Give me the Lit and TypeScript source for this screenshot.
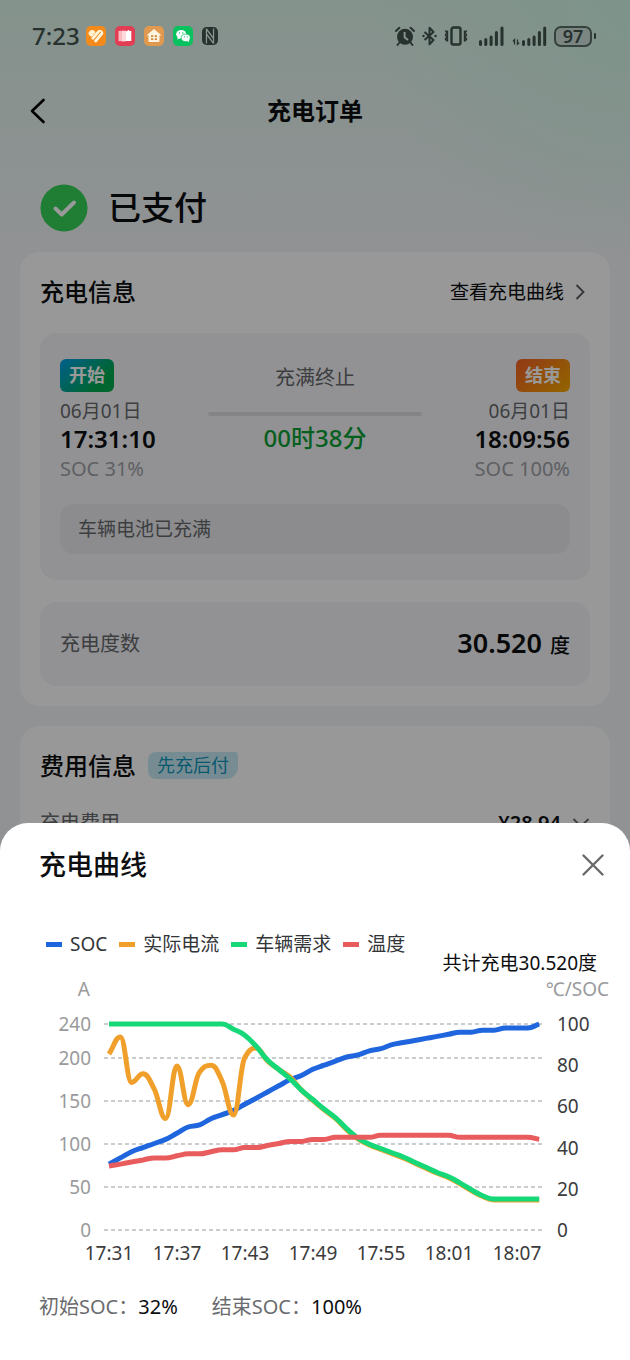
import { LitElement, html, svg, css } from "lit";
import { customElement } from "lit/decorators.js";

const SOC = [32, 35, 38, 40, 42, 44, 47, 50, 51, 54, 56, 58, 61, 64, 67, 70, 73, 75, 78, 80, 82, 84, 85, 87, 88, 90, 91, 92, 93, 94, 95, 96, 96, 97, 97, 98, 98, 98, 100];
const TEMPERATURE = [31, 32, 33, 34, 35, 35, 36, 37, 37, 38, 39, 39, 40, 40, 41, 42, 43, 43, 44, 44, 45, 45, 45, 45, 46, 46, 46, 46, 46, 46, 46, 45, 45, 45, 45, 45, 45, 45, 44];
const DEMAND = [240, 240, 240, 240, 240, 240, 240, 240, 240, 240, 240, 234, 227, 214, 198, 187, 176, 163, 152, 141, 131, 118, 107, 100, 95, 90, 85, 79, 73, 67, 62, 55, 47, 40, 36, 36, 36, 36, 36];
const CURRENT = [205, 225, 172, 182, 164, 130, 191, 146, 184, 192, 173, 134, 201, 212, 197, 187, 178, 163, 151, 140, 130, 117, 106, 99, 94, 89, 84, 78, 72, 66, 61, 54, 46, 39, 35, 35, 35, 35, 35];

const PLOT = { left: 109, step: 11.32, top: 49, bottom: 255 };

/** Smooth path through one value per minute, without overshoot. */
function curve(values: number[], max: number): string {
  const h = PLOT.step;
  const y = values.map((v) => PLOT.bottom - (v / max) * (PLOT.bottom - PLOT.top));
  const slope = y.slice(1).map((v, i) => (v - y[i]) / h);
  const tangent = y.map((_, i) => {
    if (i === 0) return slope[0];
    if (i === y.length - 1) return slope[i - 1];
    const a = slope[i - 1];
    const b = slope[i];
    if (a * b <= 0) return 0;
    return Math.sign(a) * Math.min(Math.abs(a + b) / 2, 2 * Math.abs(a), 2 * Math.abs(b));
  });
  const r = h * 0.42;
  let d = `M${PLOT.left} ${y[0].toFixed(1)}`;
  for (let i = 1; i < y.length; i++) {
    const x0 = PLOT.left + h * (i - 1);
    const x1 = x0 + h;
    d += `C${(x0 + r).toFixed(1)} ${(y[i - 1] + tangent[i - 1] * r).toFixed(1)} ${(x1 - r).toFixed(1)} ${(y[i] - tangent[i] * r).toFixed(1)} ${x1.toFixed(1)} ${y[i].toFixed(1)}`;
  }
  return d;
}

@customElement("status-bar")
class StatusBar extends LitElement {
  static styles = css`
    :host { display: flex; align-items: center; justify-content: space-between; height: 72px; padding: 0 34px 0 32px; color: #27322f; position: relative; z-index: 2; }
    .group { display: flex; align-items: center; }
    .left { gap: 9px; }
    .time { font-size: 24px; line-height: 32px; font-weight: 500; margin-right: -3px; }
    .right { gap: 7px; }
    .battery { display: flex; align-items: center; }
    .level { box-sizing: border-box; width: 38px; height: 21px; border: 2px solid #35413d; border-radius: 7px; background: #7b8582; font-size: 18px; font-weight: 600; line-height: 17px; text-align: center; }
    .tip { width: 2px; height: 6px; margin-left: 2px; border-radius: 1px; background: #27322f; }
    svg { display: block; }
  `;
  render() {
    return html`
      <div class="group left">
        <span class="time">7:23</span>
        <svg width="20" height="20" viewBox="0 0 20 20"><rect width="20" height="20" rx="5" fill="#f58a1c"/><path d="M3 8.500C2.400 4.500 7 3.200 9.200 6L5.600 10.600Z" fill="#fff3cf" stroke="#fff3cf" stroke-linejoin="round"/><path d="M6.800 12.300 12.600 5.600M9.600 15 16 7.300" stroke="#fff6dc" stroke-width="2.800" stroke-linecap="round"/><path d="M12.600 5.600C14 4.300 16.700 5 16 7.300" stroke="#fff6dc" stroke-width="1.600" fill="none"/></svg>
        <svg width="20" height="20" viewBox="0 0 20 20"><rect width="20" height="20" rx="5" fill="#e23d52"/><path d="M3.500 5 9 4.600V15.400L3.500 15Z" fill="#fbb9c0"/><path d="M7 5.400 11 4.600V15.600L7 15Z" fill="#ffd9dc"/><path d="M11 5.600 14.200 3.800V5L16.300 5V15H11Z" fill="#fff"/></svg>
        <svg width="20" height="20" viewBox="0 0 20 20"><rect width="20" height="20" rx="5" fill="#e0994e"/><path d="M10 3.500 16.500 9H15V15.500H5V9H3.500Z" fill="#fff4df" stroke="#fff4df" stroke-linejoin="round"/><path d="M7 9.200H9.300V11H7ZM10.700 9.200H13V11H10.700ZM7 12.200H9.300V14H7ZM10.700 12.200H13V14H10.700Z" fill="#d08a44"/></svg>
        <svg width="20" height="20" viewBox="0 0 20 20"><rect width="20" height="20" rx="5" fill="#0ac160"/><ellipse cx="8.200" cy="8.300" rx="5" ry="4.200" fill="#fff"/><path d="M4.600 10.500 4.500 13.400 7.500 12Z" fill="#fff"/><ellipse cx="12.700" cy="11.800" rx="4.500" ry="3.700" fill="#fff" stroke="#0ac160" stroke-width=".7"/><path d="M14 14.500 16 16.200 16 13Z" fill="#fff"/><g fill="#0ac160"><circle cx="6.500" cy="7" r=".7"/><circle cx="9.800" cy="7" r=".7"/><circle cx="11.300" cy="10.800" r=".6"/><circle cx="14.200" cy="10.800" r=".6"/></g></svg>
        <svg width="16" height="20" viewBox="0 0 18 20" preserveAspectRatio="none"><rect x="0" y="1" width="18" height="18" rx="5" fill="#27322f"/><path d="M5 2.500V17.500M13 2.500V17.500M5 3 13 12.500M5 8 13 17.500" stroke="#8a9590" stroke-width="1.400" fill="none"/></svg>
      </div>
      <div class="group right">
        <svg width="20" height="20" viewBox="0 0 20 20"><circle cx="10" cy="10.800" r="8" fill="currentColor"/><path d="M9.600 6V11.200L13 14" stroke="#8a9590" stroke-width="1.900" fill="none"/><path d="M1 5 4.400 1.700M19 5 15.600 1.700M4.500 16.500 2.500 19M15.500 16.500 17.500 19" stroke="currentColor" stroke-width="1.900" stroke-linecap="round"/></svg>
        <svg width="15" height="20" viewBox="0 0 15 20"><path d="M2.500 6 11.500 14 7.500 18.200V1.800L11.500 6 2.500 14" stroke="currentColor" stroke-width="2" fill="none" stroke-linejoin="round"/><circle cx="1.500" cy="10" r="1.200" fill="currentColor"/><circle cx="13.500" cy="10" r="1.200" fill="currentColor"/></svg>
        <svg width="24" height="20" viewBox="0 0 24 20"><rect x="7.500" y="1.500" width="9" height="17" rx="2" fill="none" stroke="currentColor" stroke-width="2.400"/><path d="M1.300 4.500 2.900 6.500 1.400 9 2.900 11 1.400 13 2.900 15M3.500 4.500V15.500M22.700 4.500 21.100 6.500 22.600 9 21.100 11 22.600 13 21.100 15M20.500 4.500V15.500" stroke="currentColor" stroke-width="1.400" fill="none"/></svg>
        <svg width="30" height="20" viewBox="0 0 30 20"><path d="M5.500 15.500V18.500M10.800 13.500V18.500M16.100 11V18.500M21.400 6.500V18.500M27 2V18.500" stroke="currentColor" stroke-width="3" stroke-linecap="round"/></svg>
        <svg width="35" height="20" viewBox="0 0 35 20"><path d="M2.500 18.500V13.800L1 15.500M5.500 13.500V18.300L7.300 16.600" stroke="currentColor" stroke-width="1.300" fill="none"/><path d="M11.500 15.500V18.500M16.800 13.500V18.500M22.100 11V18.500M27.400 6.500V18.500M32.700 2V18.500" stroke="currentColor" stroke-width="3" stroke-linecap="round"/></svg>
        <div class="battery"><span class="level">97</span><span class="tip"></span></div>
      </div>
    `;
  }
}

@customElement("charge-chart")
class ChargeChart extends LitElement {
  static styles = css`
    :host { display: block; }
    svg { display: block; width: 100%; height: auto; }
    text { font-size: 19px; fill: #3b3b3d; }
    .muted { fill: #9a9a9c; }
    .end { text-anchor: end; }
    .mid { text-anchor: middle; }
    .grid { stroke: #cbcccd; stroke-width: 2; stroke-dasharray: 4 3; }
    .line { fill: none; stroke-width: 5; stroke-linejoin: round; }
    .soc { stroke: #1f66de; }
    .current { stroke: #f0a02a; }
    .demand { stroke: #17d878; }
    .temp { stroke: #e95c5e; }
  `;
  render() {
    const amps = [240, 200, 150, 100, 50, 0];
    const percents = [100, 80, 60, 40, 20, 0];
    const times = ["17:31", "17:37", "17:43", "17:49", "17:55", "18:01", "18:07"];
    const span = PLOT.bottom - PLOT.top;
    const ay = (v: number) => Math.round(PLOT.bottom - (v / 240) * span);
    const py = (v: number) => Math.round(PLOT.bottom - (v / 100) * span);
    return html`
      <svg viewBox="0 0 630 296" role="img" aria-label="充电曲线">
        <text class="muted end" x="90" y="21">A</text>
        <text class="muted end" x="609" y="21">℃/SOC</text>
        ${amps.map((v) => svg`<path class="grid" d="M104 ${ay(v)}H543"/><text class="muted end" x="91" y=${ay(v) + 7}>${v}</text>`)}
        ${percents.map((v) => svg`<text x="557" y=${py(v) + 7}>${v}</text>`)}
        ${times.map((t, i) => svg`<text class="mid" x=${109 + i * 68} y="285">${t}</text>`)}
        <path class="line soc" d=${curve(SOC, 100)}/>
        <path class="line current" d=${curve(CURRENT, 240)}/>
        <path class="line demand" d=${curve(DEMAND, 240)}/>
        <path class="line temp" d=${curve(TEMPERATURE, 100)}/>
      </svg>
    `;
  }
}

@customElement("app-root")
class AppRoot extends LitElement {
  static styles = css`
    :host { display: block; position: relative; height: 100vh; overflow: hidden; font-family: "Noto Sans", "Noto Sans CJK SC", sans-serif; color: #0c0e10; background: radial-gradient(circle at 100% 0, #d2f7e6 0, rgba(210, 247, 230, 0) 260px), linear-gradient(#dcf5e9 0, #e6f3f0 110px, #ecf3f4 190px, #f2f4f7 260px); }
    h1, h2, p, dl, dd { margin: 0; }
    button { padding: 0; border: 0; background: none; font: inherit; color: inherit; cursor: pointer; }
    svg { display: block; }
    .shade { position: absolute; inset: 0; z-index: 1; background: rgba(0, 0, 0, 0.4); }
    .nav { display: grid; grid-template-columns: 32px 1fr 32px; align-items: center; height: 78px; padding: 0 24px; }
    .nav h1 { font-size: 24px; line-height: 32px; font-weight: 600; text-align: center; }
    .paid { display: flex; align-items: center; gap: 20px; height: 102px; padding: 14px 40px 0; box-sizing: border-box; }
    .paid h2 { font-size: 33px; line-height: 44px; font-weight: 500; }
    .card { margin: 0 20px 20px; padding: 0 20px 20px; border-radius: 20px; background: #fefefe; }
    .head { display: flex; align-items: center; height: 79px; margin-bottom: 2px; }
    .head h2 { font-size: 24px; line-height: 32px; font-weight: 500; }
    .more { display: flex; align-items: center; height: 28px; gap: 6px; margin-left: auto; font-size: 19px; line-height: 28px; }
    .panel { padding: 26px 20px; border-radius: 16px; background: #f3f4f7; }
    .session { display: grid; grid-template-columns: 1fr 214px 1fr; }
    .side { display: flex; flex-direction: column; align-items: flex-start; }
    .side.finish { align-items: flex-end; }
    .badge { margin-bottom: 5px; padding: 0 9px; border-radius: 6px; color: #fff; font-size: 18px; line-height: 33px; font-weight: 600; background: linear-gradient(135deg, #00a2e8, #00a84e 75%); }
    .finish .badge { background: linear-gradient(135deg, #f25f25, #f5a800); }
    .date { color: #66686c; font-size: 19px; line-height: 28px; }
    .clock { font-size: 24px; line-height: 28px; font-weight: 600; }
    .soc { color: #9da0a5; font-size: 20px; line-height: 31px; }
    .middle { display: flex; flex-direction: column; align-items: stretch; text-align: center; }
    .reason { color: #66686c; font-size: 20px; line-height: 38px; }
    .rule { height: 4px; margin: 15px 0 7px; border-radius: 2px; background: #dcdde0; }
    .length { color: #0a9e35; font-size: 24px; line-height: 30px; font-weight: 500; }
    .note { margin-top: 20px; padding: 0 18px; border-radius: 14px; background: #e9eaed; color: #66686c; font-size: 19px; line-height: 50px; }
    .energy { display: flex; align-items: center; justify-content: space-between; height: 84px; margin-top: 22px; padding: 0 20px; }
    .label { color: #66686c; font-size: 20px; line-height: 28px; }
    .amount { display: flex; align-items: baseline; gap: 8px; font-size: 27px; line-height: 36px; font-weight: 600; }
    .unit { font-size: 20px; font-weight: 500; }
    .tag { margin-left: 12px; padding: 0 9px; border-radius: 8px 3px 12px 8px; background: #c5e9f4; color: #0f94ba; font-size: 18px; line-height: 27px; }
    .fee { display: flex; align-items: center; gap: 11px; height: 32px; }
    .price { margin-left: auto; font-size: 20px; font-weight: 600; line-height: 28px; }
    .sheet { position: absolute; left: 0; right: 0; bottom: 0; z-index: 3; border-radius: 28px 28px 0 0; background: #fff; }
    .title { display: flex; align-items: center; justify-content: space-between; height: 84px; padding: 0 26px 0 39px; }
    .title h2 { font-size: 27px; line-height: 36px; font-weight: 500; }
    .legend { display: flex; align-items: center; gap: 12px; padding: 26px 46px 0; font-size: 19px; line-height: 22px; color: #333538; }
    .key { display: flex; align-items: center; gap: 8px; }
    .key::before { content: ""; width: 16px; height: 5px; background: var(--ink); }
    .k-soc { --ink: #1f66de; }
    .k-current { --ink: #f0a02a; }
    .k-demand { --ink: #17d878; }
    .k-temp { --ink: #e95c5e; }
    .total { margin-bottom: 4px; padding-right: 33px; text-align: right; font-size: 19px; line-height: 16px; }
    .summary { display: flex; gap: 34px; padding: 20px 39px 37px; font-size: 20px; line-height: 32px; }
    .pair { display: flex; }
    .pair dt { color: #6b6c6f; }
  `;
  render() {
    return html`
      <status-bar></status-bar>
      <header class="nav">
        <button aria-label="返回"><svg width="28" height="28" viewBox="0 0 28 28"><path d="M19.500 3 8 14 19.500 25" fill="none" stroke="#000" stroke-width="2.600" stroke-linecap="round" stroke-linejoin="round"/></svg></button>
        <h1>充电订单</h1>
      </header>
      <section class="paid">
        <svg width="48" height="48" viewBox="0 0 48 48"><circle cx="24" cy="24" r="23.500" fill="#34d058"/><path d="M15.500 24.500 21.700 30.500 34 18.500" fill="none" stroke="#fff" stroke-width="4" stroke-linecap="round" stroke-linejoin="round"/></svg>
        <h2>已支付</h2>
      </section>
      <section class="card">
        <div class="head">
          <h2>充电信息</h2>
          <button class="more">查看充电曲线<svg width="20" height="20" viewBox="0 0 20 20"><path d="M6.500 3 13.500 10 6.500 17" fill="none" stroke="#55585c" stroke-width="1.800"/></svg></button>
        </div>
        <div class="panel">
          <div class="session">
            <div class="side">
              <span class="badge">开始</span><span class="date">06月01日</span><span class="clock">17:31:10</span><span class="soc">SOC 31%</span>
            </div>
            <div class="middle">
              <span class="reason">充满终止</span><span class="rule"></span><span class="length">00时38分</span>
            </div>
            <div class="side finish">
              <span class="badge">结束</span><span class="date">06月01日</span><span class="clock">18:09:56</span><span class="soc">SOC 100%</span>
            </div>
          </div>
          <p class="note">车辆电池已充满</p>
        </div>
        <div class="panel energy">
          <span class="label">充电度数</span>
          <span class="amount">30.520<span class="unit">度</span></span>
        </div>
      </section>
      <section class="card">
        <div class="head"><h2>费用信息</h2><span class="tag">先充后付</span></div>
        <div class="fee">
          <span class="label">充电费用</span>
          <span class="price">¥28.94</span>
          <svg width="18" height="18" viewBox="0 0 18 18"><path d="M1.500 5 9 12.500 16.500 5" fill="none" stroke="#66686c" stroke-width="1.800"/></svg>
        </div>
      </section>
      <div class="shade"></div>
      <section class="sheet" role="dialog" aria-label="充电曲线">
        <div class="title">
          <h2>充电曲线</h2>
          <button aria-label="关闭"><svg width="22" height="22" viewBox="0 0 22 22"><path d="M1.500 1.500 20.500 20.500M20.500 1.500 1.500 20.500" stroke="#6a6a6c" stroke-width="2.400" stroke-linecap="round"/></svg></button>
        </div>
        <div class="legend">
          <span class="key k-soc">SOC</span><span class="key k-current">实际电流</span><span class="key k-demand">车辆需求</span><span class="key k-temp">温度</span>
        </div>
        <p class="total">共计充电30.520度</p>
        <charge-chart></charge-chart>
        <dl class="summary">
          <div class="pair"><dt>初始SOC：</dt><dd>32%</dd></div>
          <div class="pair"><dt>结束SOC：</dt><dd>100%</dd></div>
        </dl>
      </section>
    `;
  }
}
